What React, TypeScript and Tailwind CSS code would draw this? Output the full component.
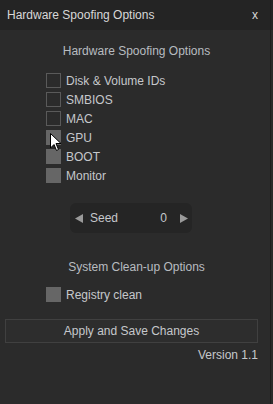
import React from "react";

const Box = ({ filled }: { filled?: boolean }) => (
  <div
    className={
      filled
        ? "w-[15px] h-[15px] bg-[#666666]"
        : "w-[15px] h-[15px] border border-[#5a5a5a] bg-[#2b2b2b]"
    }
  />
);

const Row = ({ label, filled }: { label: string; filled?: boolean }) => (
  <div className="flex items-center h-[19px] gap-[5px]">
    <Box filled={filled} />
    <span>{label}</span>
  </div>
);

export default function App() {
  return (
    <div
      className="w-[273px] h-[404px] bg-[#2b2b2b] text-[12px] text-[#c6c8cc] flex flex-col relative overflow-hidden"
      style={{ fontFamily: '"Liberation Sans", Arial, sans-serif' }}
    >
      <div className="h-[30px] bg-[#242424] flex items-center justify-between pl-[7px] pr-[15px] text-[#d8d8d8]">
        <span>Hardware Spoofing Options</span>
        <span>x</span>
      </div>
      <div className="flex flex-col">
        <div className="text-center mt-[12px] h-[16px] text-[#b8bcc0]">Hardware Spoofing Options</div>
        <div className="flex flex-col pl-[46px] mt-[13px]">
          <Row label="Disk & Volume IDs" />
          <Row label="SMBIOS" />
          <Row label="MAC" />
          <Row label="GPU" filled />
          <Row label="BOOT" filled />
          <Row label="Monitor" filled />
        </div>
        <div className="flex justify-start pl-[70px] mt-[18px]">
          <div className="w-[122px] h-[30px] bg-[#252525] rounded-[6px] flex items-center pl-[5px] pr-[4px] text-[#c6c8cc]">
            <svg width="8" height="9" viewBox="0 0 8 9">
              <path d="M0 4.5 L8 0 L8 9 Z" fill="#9a9a9a" />
            </svg>
            <span className="ml-[7px]">Seed</span>
            <span className="ml-auto mr-[13px]">0</span>
            <svg width="8" height="9" viewBox="0 0 8 9">
              <path d="M8 4.5 L0 0 L0 9 Z" fill="#9a9a9a" />
            </svg>
          </div>
        </div>
        <div className="text-center mt-[25px] h-[16px] text-[#b8bcc0]">System Clean-up Options</div>
        <div className="pl-[46px] mt-[11px]">
          <Row label="Registry clean" filled />
        </div>
        <div className="mx-[5px] w-[253px] mt-[15px] h-[24px] border border-[#404040] bg-[#2d2d2d] flex items-center justify-center">
          Apply and Save Changes
        </div>
        <div className="w-[258px] text-right mt-[3px]">Version 1.1</div>
      </div>
      <div className="absolute top-0 right-[2px] w-[1px] h-full bg-[#1e1e1e]" />
      <svg className="absolute left-[50px] top-[133px]" width="12" height="19" viewBox="0 0 12 19">
        <path d="M0.5 0.5 L0.5 15 L4 11.5 L6.5 17.5 L8.5 16.5 L6 10.5 L11 10.5 Z" fill="#ffffff" stroke="#000000" strokeWidth="1" />
      </svg>
    </div>
  );
}
